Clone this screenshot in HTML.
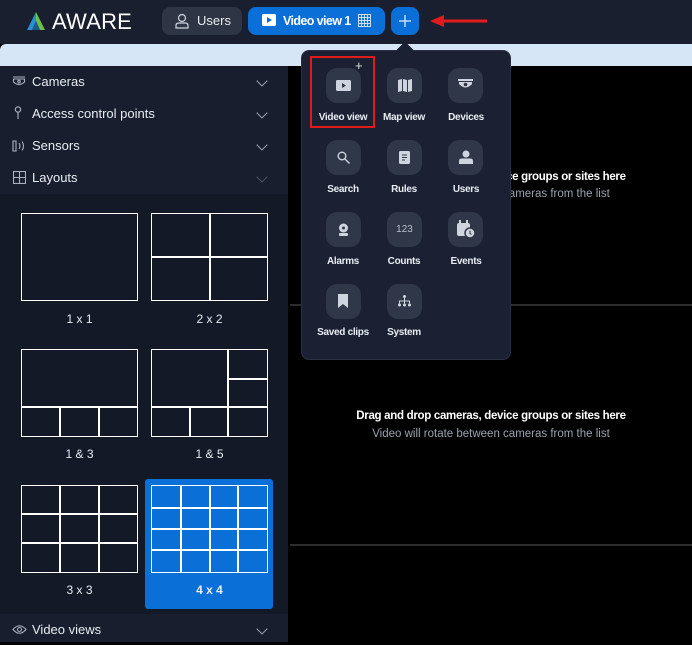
<!DOCTYPE html>
<html><head><style>
*{box-sizing:border-box;margin:0;padding:0}
body{width:692px;height:642px;background:#000;font-family:"Liberation Sans",sans-serif;position:relative;overflow:hidden;color:#fff}
.abs{position:absolute}
.top{left:0;top:0;width:692px;height:44px;background:#1a1f2f}
.strip{left:0;top:44px;width:692px;height:22px;background:#d6e6f7;border-radius:6px 0 0 0}
.side{left:0;top:66px;width:288px;height:576px;background:#191e2f}
.row{position:absolute;left:0;width:288px;height:32px;font-size:13px;color:#e8ecf2;line-height:32px;padding-left:32px}
.chev{position:absolute;right:22px;top:11px;width:8px;height:8px;border-right:1.3px solid #9aa3b2;border-bottom:1.3px solid #9aa3b2;transform:rotate(45deg)}
.lay{left:0;top:194px;width:288px;height:420px;background:#131926}
.th{position:absolute;width:117px;height:88px;border:1.5px solid #fff}
.th i{position:absolute;background:#fff}
.lbl{position:absolute;width:117px;text-align:center;font-size:12px;color:#e8ecf2}
.pop{left:301px;top:50px;width:210px;height:310px;background:#1b2133;border-radius:8px;border:1px solid #2a3144}
.tile{position:absolute;width:35px;height:35px;border-radius:11px;background:#2f3748}
.tl{position:absolute;width:70px;text-align:center;font-size:10px;font-weight:bold;color:#e8ecf2;letter-spacing:-0.3px}
.msg{position:absolute;left:290px;width:402px;text-align:center}
</style></head><body>
<div class="abs top"></div>
<svg class="abs" style="left:26px;top:11px" width="20" height="20" viewBox="0 0 20 20"><path d="M10 1 L1 19 H6 L10 10Z" fill="#2b8fd6"/><path d="M10 1 L19 19 H14 L10 10Z" fill="#6cbf4b"/><path d="M6 19 L10 10 L14 19Z" fill="#1d5a8a"/></svg>
<div class="abs" style="left:52px;top:9px;font-size:22px;letter-spacing:0.2px;color:#fff">AWARE</div>
<div class="abs" style="left:162px;top:7px;width:80px;height:28px;background:#2e3545;border-radius:8px;font-size:13px;line-height:28px;padding-left:35px;color:#e8ecf2">Users</div>
<svg class="abs" style="left:175px;top:13px" width="14" height="16" viewBox="0 0 14 16"><circle cx="7" cy="5" r="3.5" fill="none" stroke="#cfd5de" stroke-width="1.2"/><path d="M1 15 V12.5 Q1 10 4 10 H10 Q13 10 13 12.5 V15Z" fill="none" stroke="#cfd5de" stroke-width="1.2"/></svg>
<div class="abs" style="left:248px;top:7px;width:137px;height:28px;background:#0a6fd6;border-radius:8px;font-size:12.5px;font-weight:bold;line-height:28px;padding-left:35px;letter-spacing:-0.6px">Video view 1</div>
<svg class="abs" style="left:262px;top:14px" width="14" height="12"><rect width="14" height="12" rx="1.5" fill="#fff"/><path d="M5 3 L10 6 L5 9Z" fill="#0a6fd6"/></svg>
<svg class="abs" style="left:358px;top:14px" width="13" height="13" stroke="#cfe0f5" stroke-width="1" fill="none"><rect x=".5" y=".5" width="12" height="12"/><path d="M3.5 0V13M6.5 0V13M9.5 0V13M0 3.5H13M0 6.5H13M0 9.5H13"/></svg>
<div class="abs" style="left:391px;top:7px;width:28px;height:28px;background:#0a6fd6;border-radius:8px"></div>
<svg class="abs" style="left:398px;top:14px" width="14" height="14" stroke="#e0ecfa" stroke-width="1.3"><path d="M7 1V13M1 7H13"/></svg>
<svg class="abs" style="left:428px;top:14px" width="62" height="14"><path d="M12 7H59" stroke="#e01b1b" stroke-width="3"/><path d="M2 7 L16 1 V13Z" fill="#e01b1b"/></svg>
<div class="abs strip"></div>
<div class="abs side"></div>
<div class="row" style="top:66px">Cameras<div class="chev"></div></div>
<svg class="abs" style="left:12px;top:76px" width="14" height="11" fill="none" stroke="#aab2c0" stroke-width="1.1"><path d="M1 1H13M1.5 3H12.5V6Q7 11 1.5 6Z"/><circle cx="7" cy="5.5" r="1.2"/></svg>
<div class="row" style="top:98px">Access control points<div class="chev"></div></div>
<svg class="abs" style="left:14px;top:106px" width="8" height="15" fill="none" stroke="#aab2c0" stroke-width="1.1"><circle cx="4" cy="3.5" r="2.7"/><path d="M4 6.2V13"/></svg>
<div class="row" style="top:130px">Sensors<div class="chev"></div></div>
<svg class="abs" style="left:12px;top:140px" width="16" height="12" fill="none" stroke="#aab2c0" stroke-width="1.1"><path d="M1 1H4V11H1Z"/><path d="M7 3Q9 6 7 9M10 1.5Q13 6 10 10.5"/></svg>
<div class="row" style="top:162px">Layouts<div class="chev" style="border-color:#4a5263"></div></div>
<svg class="abs" style="left:13px;top:171px" width="13" height="13" fill="none" stroke="#aab2c0" stroke-width="1.1"><rect x=".5" y=".5" width="12" height="12"/><path d="M6.5 0V13M0 6.5H13"/></svg>
<div class="abs lay"></div>
<div class="th" style="left:21px;top:213px"></div>
<div class="th" style="left:151px;top:213px"><i style="left:57px;top:0;width:1.5px;height:86px"></i><i style="left:0;top:42px;width:115px;height:1.5px"></i></div>
<div class="lbl" style="left:21px;top:312px">1 x 1</div><div class="lbl" style="left:151px;top:312px">2 x 2</div>
<div class="th" style="left:21px;top:349px"><i style="left:0;top:56px;width:115px;height:1.5px"></i><i style="left:37px;top:56px;width:1.5px;height:30px"></i><i style="left:76px;top:56px;width:1.5px;height:30px"></i></div>
<div class="th" style="left:151px;top:349px"><i style="left:0;top:56px;width:115px;height:1.5px"></i><i style="left:75px;top:0;width:1.5px;height:86px"></i><i style="left:37px;top:56px;width:1.5px;height:30px"></i><i style="left:75px;top:28px;width:40px;height:1.5px"></i></div>
<div class="lbl" style="left:21px;top:447px">1 &amp; 3</div><div class="lbl" style="left:151px;top:447px">1 &amp; 5</div>
<div class="th" style="left:21px;top:485px"><i style="left:37px;top:0;width:1.5px;height:86px"></i><i style="left:76px;top:0;width:1.5px;height:86px"></i><i style="left:0;top:27px;width:115px;height:1.5px"></i><i style="left:0;top:56px;width:115px;height:1.5px"></i></div>
<div class="abs" style="left:145px;top:479px;width:128px;height:130px;background:#0a6fd6;border-radius:3px"></div>
<div class="th" style="left:151px;top:485px"><i style="left:28px;top:0;width:1.5px;height:86px"></i><i style="left:57px;top:0;width:1.5px;height:86px"></i><i style="left:85px;top:0;width:1.5px;height:86px"></i><i style="left:0;top:21px;width:115px;height:1.5px"></i><i style="left:0;top:42px;width:115px;height:1.5px"></i><i style="left:0;top:63px;width:115px;height:1.5px"></i></div>
<div class="lbl" style="left:21px;top:583px">3 x 3</div><div class="lbl" style="left:151px;top:583px;font-weight:bold">4 x 4</div>
<div class="row" style="top:615px;height:27px;line-height:30px">Video views<div class="chev" style="top:10px"></div></div>
<svg class="abs" style="left:12px;top:624px" width="15" height="11" fill="none" stroke="#aab2c0" stroke-width="1.1"><path d="M1 5.5Q7.5 -2 14 5.5Q7.5 13 1 5.5Z"/><circle cx="7.5" cy="5.5" r="2"/></svg>
<div class="abs" style="left:290px;top:304px;width:402px;height:2px;background:#2c2c2c"></div>
<div class="abs" style="left:290px;top:544px;width:402px;height:2px;background:#2c2c2c"></div>
<div class="msg" style="top:171px;font-size:11.5px;font-weight:bold;letter-spacing:-0.3px">Drag and drop cameras, device groups or sites here</div>
<div class="msg" style="top:188px;font-size:11.5px;color:#9aa3ad">Video will rotate between cameras from the list</div>
<div class="msg" style="top:410px;font-size:11.5px;font-weight:bold;letter-spacing:-0.3px">Drag and drop cameras, device groups or sites here</div>
<div class="msg" style="top:428px;font-size:11.5px;color:#9aa3ad">Video will rotate between cameras from the list</div>
<div class="abs pop"></div>
<div class="abs" style="left:399px;top:44px;width:12px;height:12px;background:#1b2133;transform:rotate(45deg)"></div>
<div class="tile" style="left:326px;top:68px"></div><div class="tile" style="left:387px;top:68px"></div><div class="tile" style="left:448px;top:68px"></div>
<div class="tile" style="left:326px;top:140px"></div><div class="tile" style="left:387px;top:140px"></div><div class="tile" style="left:448px;top:140px"></div>
<div class="tile" style="left:326px;top:212px"></div><div class="tile" style="left:387px;top:212px"></div><div class="tile" style="left:448px;top:212px"></div>
<div class="tile" style="left:326px;top:284px"></div><div class="tile" style="left:387px;top:284px"></div>
<div class="tl" style="left:308px;top:112px">Video view</div><div class="tl" style="left:369px;top:112px">Map view</div><div class="tl" style="left:431px;top:112px">Devices</div>
<div class="tl" style="left:308px;top:184px">Search</div><div class="tl" style="left:369px;top:184px">Rules</div><div class="tl" style="left:431px;top:184px">Users</div>
<div class="tl" style="left:308px;top:256px">Alarms</div><div class="tl" style="left:369px;top:256px">Counts</div><div class="tl" style="left:431px;top:256px">Events</div>
<div class="tl" style="left:308px;top:327px">Saved clips</div><div class="tl" style="left:369px;top:327px">System</div>
<div class="abs" style="left:310px;top:56px;width:65px;height:72px;border:2.5px solid #e01b1b"></div>
<div class="abs" style="left:355px;top:58px;font-size:13px;color:#ddd">+</div>
<svg class="abs" style="left:336px;top:80px" width="15" height="11"><rect width="15" height="11" rx="1.5" fill="#cfd5de"/><path d="M6 3L10 5.5L6 8Z" fill="#2f3748"/></svg>
<svg class="abs" style="left:398px;top:79px" width="14" height="13" fill="#cfd5de"><path d="M0 1L4 0V12L0 13ZM5 0L9 1V13L5 12ZM10 1L14 0V12L10 13Z"/></svg>
<svg class="abs" style="left:458px;top:79px" width="15" height="12"><path d="M0 0H15V2H0Z" fill="#cfd5de"/><path d="M1 3H14V5Q7.5 12 1 5Z" fill="#cfd5de"/><circle cx="7.5" cy="5.5" r="1.8" fill="#2f3748"/></svg>
<svg class="abs" style="left:337px;top:151px" width="13" height="13" fill="none" stroke="#cfd5de" stroke-width="1.4"><circle cx="5" cy="5" r="3.8"/><path d="M8 8L12.5 12.5"/></svg>
<svg class="abs" style="left:399px;top:151px" width="11" height="13"><rect width="11" height="13" rx="1.5" fill="#cfd5de"/><path d="M3 4H8M3 6.5H8M3 9H6" stroke="#2f3748" stroke-width="1"/></svg>
<svg class="abs" style="left:459px;top:150px" width="14" height="14" fill="#cfd5de"><circle cx="7" cy="4" r="3.5"/><path d="M0 14V11Q0 8.5 3 8.5H11Q14 8.5 14 11V14Z"/></svg>
<svg class="abs" style="left:338px;top:223px" width="11" height="13" fill="#cfd5de"><circle cx="5.5" cy="5" r="4.5"/><circle cx="5.5" cy="5" r="1.5" fill="#2f3748"/><rect x="1" y="10" width="9" height="3" rx="1"/></svg>
<div class="abs" style="left:387px;top:224px;width:35px;text-align:center;font-size:10px;color:#b8c0cc">123</div>
<svg class="abs" style="left:457px;top:220px" width="19" height="19" fill="#cfd5de"><rect x="0" y="3" width="13" height="13" rx="2"/><rect x="2" y="0" width="2" height="4"/><rect x="9" y="0" width="2" height="4"/><circle cx="13" cy="13" r="5" stroke="#2f3748" stroke-width="1.5"/><path d="M13 10.5V13.5L14.5 14.5" stroke="#2f3748" stroke-width="1" fill="none"/></svg>
<svg class="abs" style="left:338px;top:294px" width="10" height="14" fill="#cfd5de"><path d="M0 0H10V14L5 10L0 14Z"/></svg>
<svg class="abs" style="left:398px;top:295px" width="13" height="12" fill="#cfd5de"><circle cx="6.5" cy="1.5" r="1.5"/><circle cx="1.5" cy="10" r="1.5"/><circle cx="6.5" cy="10" r="1.5"/><circle cx="11.5" cy="10" r="1.5"/><path d="M6.5 3V8.5M1.5 8.5V6H11.5V8.5" stroke="#cfd5de" stroke-width="1" fill="none"/></svg>
</body></html>
